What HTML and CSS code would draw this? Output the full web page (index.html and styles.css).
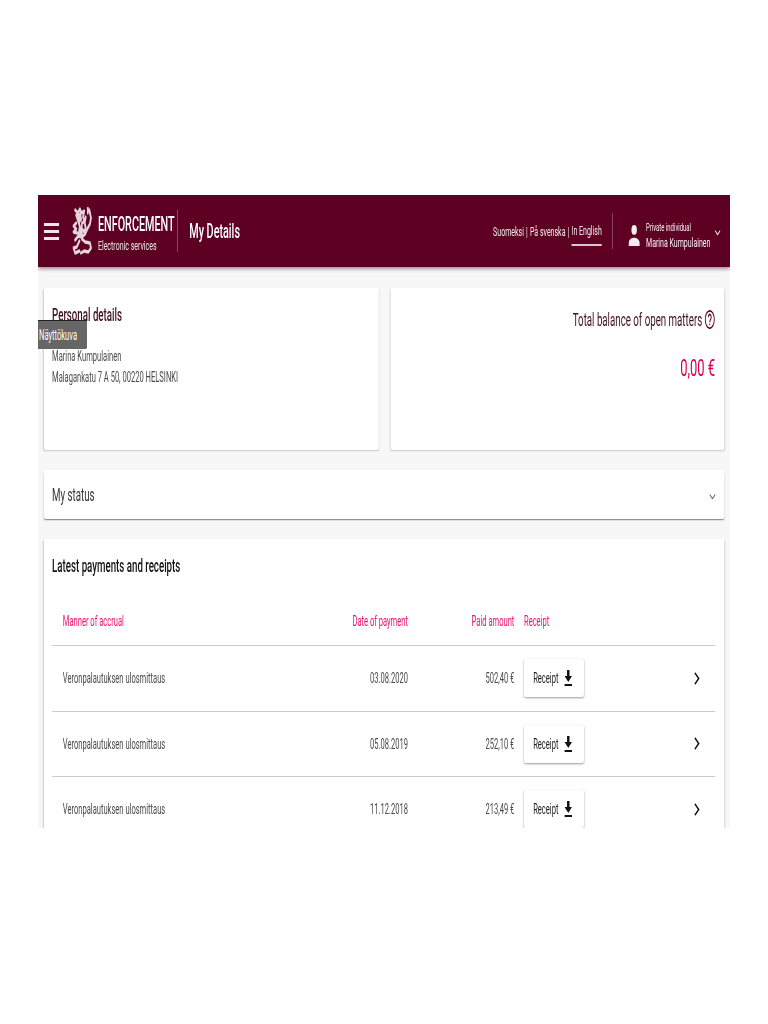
FILE: index.html
```
<!DOCTYPE html>
<html lang="en">
<head>
<meta charset="utf-8">
<title>My Details</title>
<link rel="stylesheet" href="styles.css">
</head>
<body>
<div class="frame">
  <div class="app">
    <header class="topbar">
      <div class="menu"><span></span><span></span><span></span></div>
      <svg class="lion" viewBox="0 0 40 48" preserveAspectRatio="none" aria-hidden="true">
        <g fill="none" stroke="#e6d6dc" stroke-width="3.4" stroke-linecap="round" stroke-linejoin="round">
          <path d="M6 3l5 3 4-4 3 4 5-2-2 6 3 4-5 2-1 5 5 4 3-4-2-5 2-6"/>
          <path d="M30 1v5M33 3l3 8-2 6-5 5-4 5-6 3-7-1-6 4M8 16l-5 3 5 3-5 3 7 1"/>
          <path d="M8 8l5 8 4 8 2 8 6 3 9 1 2 5-5 4-8-1-6 2M14 34l-5 6-6 1 3 5 8-2"/>
        </g>
        <path d="M9 7l8-2 2 8-4 3-4-2zM13 20l7 3 1 7-6 1-4-4z" fill="#e6d6dc"/>
      </svg>
      <div class="brand">
        <div class="brand-name">ENFORCEMENT</div>
        <div class="brand-sub">Electronic services</div>
      </div>
      <div class="page-title">My Details</div>
      <nav class="langs">
        <span>Suomeksi</span><i>|</i><span>På svenska</span><i>|</i><span class="current">In English</span>
      </nav>
      <div class="user">
        <svg class="user-icon" viewBox="0 0 24 28" preserveAspectRatio="none" aria-hidden="true">
          <ellipse cx="12" cy="6.5" rx="5.5" ry="6.5" fill="#f4ecef"/>
          <path d="M1 28v-4c0-4 5-7 11-7s11 3 11 7v4z" fill="#f4ecef"/>
        </svg>
        <div class="user-text">
          <div class="user-role">Private individual</div>
          <div class="user-name">Marina Kumpulainen</div>
        </div>
        <svg class="user-chev" viewBox="0 0 14 10" preserveAspectRatio="none" aria-hidden="true"><path d="M2 2l5 5 5-5" fill="none" stroke="#fff" stroke-width="1.6"/></svg>
      </div>
    </header>
    <main class="content">
      <div class="two">
        <section class="card personal">
          <h2 class="card-title">Personal details</h2>
          <p class="person-name">Marina Kumpulainen</p>
          <p class="person-addr">Malagankatu 7 A 50, 00220 HELSINKI</p>
        </section>
        <section class="card balance">
          <div class="balance-head">
            <span>Total balance of open matters</span>
            <svg class="help" viewBox="0 0 24 24" preserveAspectRatio="none" aria-hidden="true"><circle cx="12" cy="12" r="10" fill="none" stroke="#5e0022" stroke-width="2"/><path d="M8.8 9.5a3.2 3.2 0 1 1 5 2.6c-1.2.8-1.8 1.4-1.8 2.9" fill="none" stroke="#5e0022" stroke-width="2"/><rect x="11" y="16.6" width="2" height="2" fill="#5e0022"/></svg>
          </div>
          <div class="balance-sum">0,00 €</div>
        </section>
      </div>
      <section class="card status">
        <h2 class="card-title">My status</h2>
        <svg class="status-chev" viewBox="0 0 14 10" preserveAspectRatio="none" aria-hidden="true"><path d="M2 2l5 5 5-5" fill="none" stroke="#555" stroke-width="1.5"/></svg>
      </section>
      <section class="card payments">
        <h2 class="card-title payments-title">Latest payments and receipts</h2>
        <div class="row head">
          <span>Manner of accrual</span>
          <span class="num">Date of payment</span>
          <span class="num">Paid amount</span>
          <span>Receipt</span>
          <span></span>
        </div>
        <div class="row">
          <span>Veronpalautuksen ulosmittaus</span>
          <span class="num">03.08.2020</span>
          <span class="num">502,40 €</span>
          <span><button class="receipt">Receipt<svg viewBox="0 0 14 16" preserveAspectRatio="none" aria-hidden="true"><path d="M5 0h4v6h4l-6 6-6-6h4z" fill="#111"/><rect x="1" y="14" width="12" height="2" fill="#111"/></svg></button></span>
          <svg class="row-chev" viewBox="0 0 10 14" preserveAspectRatio="none" aria-hidden="true"><path d="M2 1l6 6-6 6" fill="none" stroke="#111" stroke-width="2"/></svg>
        </div>
        <div class="row">
          <span>Veronpalautuksen ulosmittaus</span>
          <span class="num">05.08.2019</span>
          <span class="num">252,10 €</span>
          <span><button class="receipt">Receipt<svg viewBox="0 0 14 16" preserveAspectRatio="none" aria-hidden="true"><path d="M5 0h4v6h4l-6 6-6-6h4z" fill="#111"/><rect x="1" y="14" width="12" height="2" fill="#111"/></svg></button></span>
          <svg class="row-chev" viewBox="0 0 10 14" preserveAspectRatio="none" aria-hidden="true"><path d="M2 1l6 6-6 6" fill="none" stroke="#111" stroke-width="2"/></svg>
        </div>
        <div class="row">
          <span>Veronpalautuksen ulosmittaus</span>
          <span class="num">11.12.2018</span>
          <span class="num">213,49 €</span>
          <span><button class="receipt">Receipt<svg viewBox="0 0 14 16" preserveAspectRatio="none" aria-hidden="true"><path d="M5 0h4v6h4l-6 6-6-6h4z" fill="#111"/><rect x="1" y="14" width="12" height="2" fill="#111"/></svg></button></span>
          <svg class="row-chev" viewBox="0 0 10 14" preserveAspectRatio="none" aria-hidden="true"><path d="M2 1l6 6-6 6" fill="none" stroke="#111" stroke-width="2"/></svg>
        </div>
      </section>
    </main>
    <div class="tooltip">Näyttökuva</div>
  </div>
</div>
</body>
</html>
```
FILE: styles.css
```
* { box-sizing: border-box; }
html, body { margin: 0; background: #fff; }
body { padding: 195px 38px 0; font-family: Roboto, "Liberation Sans", sans-serif; height: 1024px; overflow: hidden; }
.frame { width: 692px; height: 633px; overflow: hidden; background: #f7f7f7; }
.app { position: relative; width: 1282px; height: 633px; transform: scaleX(.54); transform-origin: left top; filter: blur(.35px); }
.topbar { height: 72px; background: #5e0022; color: #fff; display: flex; align-items: center; padding-left: 11px; box-shadow: 0 2px 5px rgba(0,0,0,.4); }
.menu { width: 28px; display: flex; flex-direction: column; gap: 4px; margin-right: 24px; flex: none; }
.menu span { height: 3px; background: #f0e6ea; display: block; }
.lion { width: 39px; height: 48px; margin-right: 9px; flex: none; }
.brand { width: 148px; height: 42px; border-right: 1px solid #a98092; flex: none; }
.brand-name { font-size: 20px; line-height: 24px; font-weight: 500; white-space: nowrap; margin-top: 2px; }
.brand-sub { font-size: 13px; line-height: 20px; color: #f0e0e6; white-space: nowrap; }
.page-title { font-size: 20px; font-weight: 500; margin-left: 21px; white-space: nowrap; }
.langs { margin-left: auto; font-size: 13px; display: flex; gap: 4px; height: 30px; align-items: center; white-space: nowrap; color: #f2e9ec; }
.langs i { font-style: normal; }
.langs .current { align-self: stretch; display: flex; align-items: center; border-bottom: 2px solid #d9c6cd; }
.user { display: flex; align-items: center; height: 36px; margin-left: 19px; padding-left: 29px; border-left: 1px solid #a98092; margin-right: 17px; white-space: nowrap; color: #f6eff2; }
.user-icon { width: 22px; height: 21px; margin-right: 11px; flex: none; margin-top: 9px; }
.user-text { width: 126px; margin-top: 7px; }
.user-role { font-size: 11px; line-height: 15px; }
.user-name { font-size: 13px; line-height: 15px; }
.user-chev { width: 13px; height: 8px; margin-top: 4px; flex: none; }
.content { padding: 21px 11px 0; display: flex; flex-direction: column; gap: 20px; }
.two { display: grid; grid-template-columns: 620px 1fr; gap: 22px; }
.card { background: #fff; border-radius: 3px; box-shadow: 0 1px 2px rgba(0,0,0,.2); }
.two .card { height: 162px; }
.personal { padding: 17px 15px; }
.card-title { margin: 0; font-size: 18px; font-weight: 500; color: #3e0f20; line-height: 20px; }
.person-name { margin: 21px 0 0; font-size: 14px; line-height: 20px; color: #4a4a4a; }
.person-addr { margin: 0; padding-top: 1px; font-size: 14px; line-height: 20px; color: #4a4a4a; }
.balance { padding: 19px 17px; text-align: right; }
.balance-head { font-size: 18px; color: #3e0f20; display: flex; justify-content: flex-end; align-items: center; gap: 4px; height: 24px; }
.help { width: 20px; height: 21px; flex: none; }
.balance-sum { margin-top: 22px; font-size: 24px; line-height: 30px; color: #d6004f; }
.status { height: 49px; display: flex; align-items: center; justify-content: space-between; padding: 0 15px; box-shadow: 0 2px 2px -1px rgba(0,0,0,.5); }
.status .card-title { color: #333; font-weight: 400; }
.status-chev { width: 14px; height: 8px; margin-top: 4px; }
.payments { padding: 17px 17px 0 15px; height: 400px; }
.payments-title { color: #111; }
.row { display: grid; grid-template-columns: 400px 239px 197px 332px 1fr; align-items: center; height: 65.5px; padding-left: 20px; border-top: 1px solid #ccc; font-size: 14px; color: #4a4a4a; }
.row.head { height: 69px; border-top: 0; color: #f0106e; padding-top: 20px; }
.row > .num { text-align: right; }
.row > span:nth-child(4) { padding-left: 18px; }
.receipt { display: inline-flex; align-items: center; gap: 10px; height: 38px; width: 111px; padding: 0 0 0 17px; border: 0; border-radius: 3px; background: #fff; box-shadow: 0 1px 3px rgba(0,0,0,.4); font: inherit; color: #222; }
.receipt svg { width: 16px; height: 16px; flex: none; }
.row-chev { width: 12px; height: 13px; }
.tooltip { position: absolute; left: 0; top: 125px; width: 91px; height: 29px; background: #666; border-top: 1px solid #222; border-radius: 0 3px 3px 0; color: #fff; font-size: 14px; line-height: 29px; padding-left: 2px; }
```
